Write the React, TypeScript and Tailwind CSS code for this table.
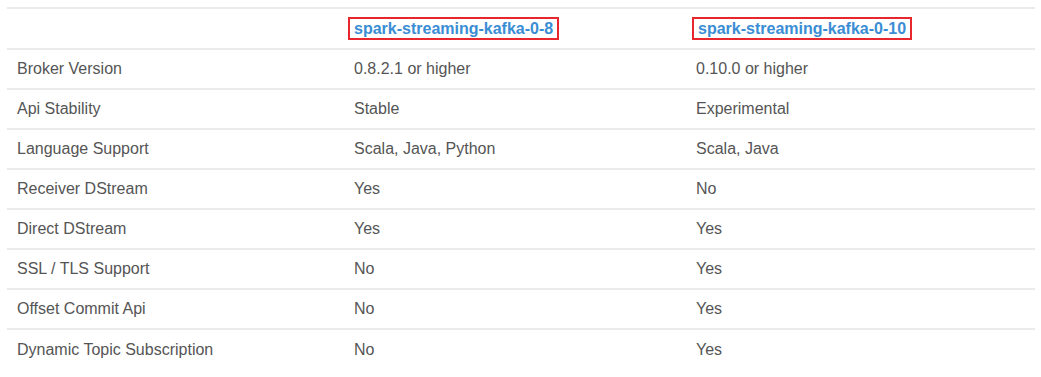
import React from "react";

const rows: [string, string, string][] = [
  ["Broker Version", "0.8.2.1 or higher", "0.10.0 or higher"],
  ["Api Stability", "Stable", "Experimental"],
  ["Language Support", "Scala, Java, Python", "Scala, Java"],
  ["Receiver DStream", "Yes", "No"],
  ["Direct DStream", "Yes", "Yes"],
  ["SSL / TLS Support", "No", "Yes"],
  ["Offset Commit Api", "No", "Yes"],
  ["Dynamic Topic Subscription", "No", "Yes"],
];

export default function App() {
  return (
    <div className="w-[1041px] h-[377px] bg-white pt-[7px] pl-[7px] font-['Liberation_Sans',Arial,sans-serif] text-[16px] text-[#555]">
      <div className="w-[1028px] border-t-2 border-[#ebebeb]">
        <div className="grid grid-cols-[337px_342px_349px] h-[41px] items-center border-b-2 border-[#ebebeb]">
          <div />
          <div className="pl-[4px]">
            <span className="inline-block border-2 border-[#e8262d] px-[4px] leading-[19px] font-bold text-[#3a8dd4]">
              spark-streaming-kafka-0-8
            </span>
          </div>
          <div className="pl-[6px]">
            <span className="inline-block border-2 border-[#e8262d] px-[4px] leading-[19px] font-bold text-[#3a8dd4]">
              spark-streaming-kafka-0-10
            </span>
          </div>
        </div>
        {rows.map((r, i) => (
          <div
            key={i}
            className={`grid grid-cols-[337px_342px_349px] h-[40px] items-center ${i < rows.length - 1 ? "border-b-2 border-[#ebebeb]" : ""}`}
          >
            <div className="pl-[10px]">{r[0]}</div>
            <div className="pl-[10px]">{r[1]}</div>
            <div className="pl-[10px]">{r[2]}</div>
          </div>
        ))}
      </div>
    </div>
  );
}
